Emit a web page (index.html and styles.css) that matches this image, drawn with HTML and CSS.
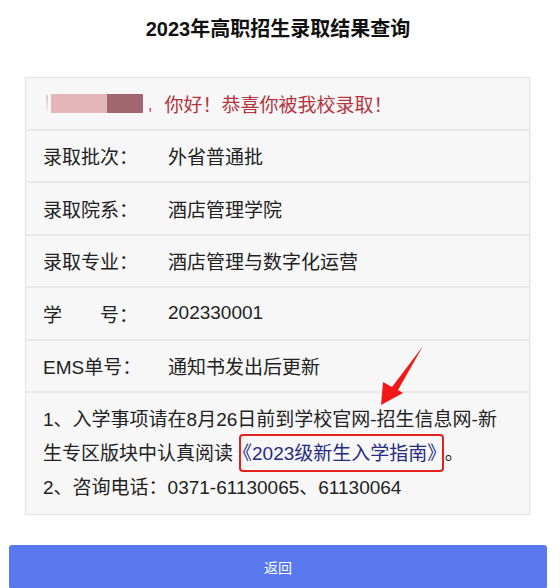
FILE: index.html
```html
<!DOCTYPE html>
<html lang="zh-CN">
<head>
<meta charset="utf-8">
<title>2023年高职招生录取结果查询</title>
<link rel="stylesheet" href="styles.css">
</head>
<body>
<div class="page">
  <h1 class="title">2023年高职招生录取结果查询</h1>
  <div class="card">
    <div class="row greet">
      <span class="mark"></span>
      <span class="blur"><span class="blur-a"></span><span class="blur-b"></span></span>
      <span class="comma">,</span>
      <span class="hello">你好！恭喜你被我校录取！</span>
    </div>
    <div class="row"><span class="label">录取批次：</span><span class="value">外省普通批</span></div>
    <div class="row"><span class="label">录取院系：</span><span class="value">酒店管理学院</span></div>
    <div class="row"><span class="label">录取专业：</span><span class="value">酒店管理与数字化运营</span></div>
    <div class="row"><span class="label">学　　号：</span><span class="value">202330001</span></div>
    <div class="row"><span class="label">EMS单号：</span><span class="value">通知书发出后更新</span></div>
    <div class="notes">
      <p>1、入学事项请在8月26日前到学校官网-招生信息网-新生专区版块中认真阅读<span class="linkbox"><a class="link">《2023级新生入学指南》</a></span>。</p>
      <p>2、咨询电话：0371-61130065、61130064</p>
    </div>
    <svg class="arrow" width="60" height="80" viewBox="0 0 60 80">
      <polygon points="52,6 27,50 32,53 10,65 12,42 21,47" fill="#f01818"/>
    </svg>
  </div>
  <button class="back">返回</button>
</div>
</body>
</html>
```
FILE: styles.css
```css
* { box-sizing: border-box; }
html, body { margin: 0; padding: 0; background: #ffffff; }
body {
  font-family: "Liberation Sans", "Noto Sans CJK SC", sans-serif;
  color: #222222;
}
.page {
  width: 560px;
  padding: 15px 13px 0 9px;
}
.title {
  margin: 0;
  height: 28px;
  line-height: 28px;
  text-align: center;
  font-size: 20px;
  font-weight: bold;
  color: #111111;
  font-family: "Liberation Sans", "Noto Sans CJK SC", sans-serif;
}
.card {
  position: relative;
  margin: 34px 17px 0 16px;
  background: #f7f7f7;
  border: 1px solid #e4e4e4;
  box-shadow: 1px 0 2px rgba(0,0,0,0.06);
}
.row {
  display: flex;
  align-items: center;
  height: 52.5px;
  padding: 0 17px;
  border-bottom: 2px solid #e9e9e9;
  font-size: 19px;
}
.label { width: 125px; flex: none; }
.value { color: #222222; }
.greet { padding-left: 20px; }
.mark {
  width: 2px; height: 16px; margin-right: 3px;
  background: linear-gradient(#d9c7c9, #f3e9ea);
}
.blur { display: flex; height: 19px; }
.blur-a { width: 56px; background: #e4b6ba; }
.blur-b { width: 36px; background: #a1666f; }
.comma { color: #b4353f; margin: 4px 12px 0 5px; font-size: 16px; }
.hello { color: #b4353f; }
.notes {
  padding: 10px 17px 9px;
  font-size: 19px;
  line-height: 34px;
}
.notes p { margin: 0; }
.linkbox {
  position: relative;
  margin-right: 8px;
}
.linkbox::before {
  content: "";
  position: absolute;
  left: 6px;
  right: -7px;
  top: -9px;
  bottom: -8px;
  border: 2.5px solid #e3221f;
  border-radius: 4px;
}
.link { color: #262a80; }
.arrow {
  position: absolute;
  left: 345px;
  top: 262px;
}
.back {
  display: block;
  width: 538px;
  height: 44px;
  margin-top: 30px;
  border: none;
  border-radius: 3px;
  background: #5a78ee;
  color: #ffffff;
  font-family: "Liberation Sans", "Noto Sans CJK SC", sans-serif;
  font-size: 14px;
}
```
